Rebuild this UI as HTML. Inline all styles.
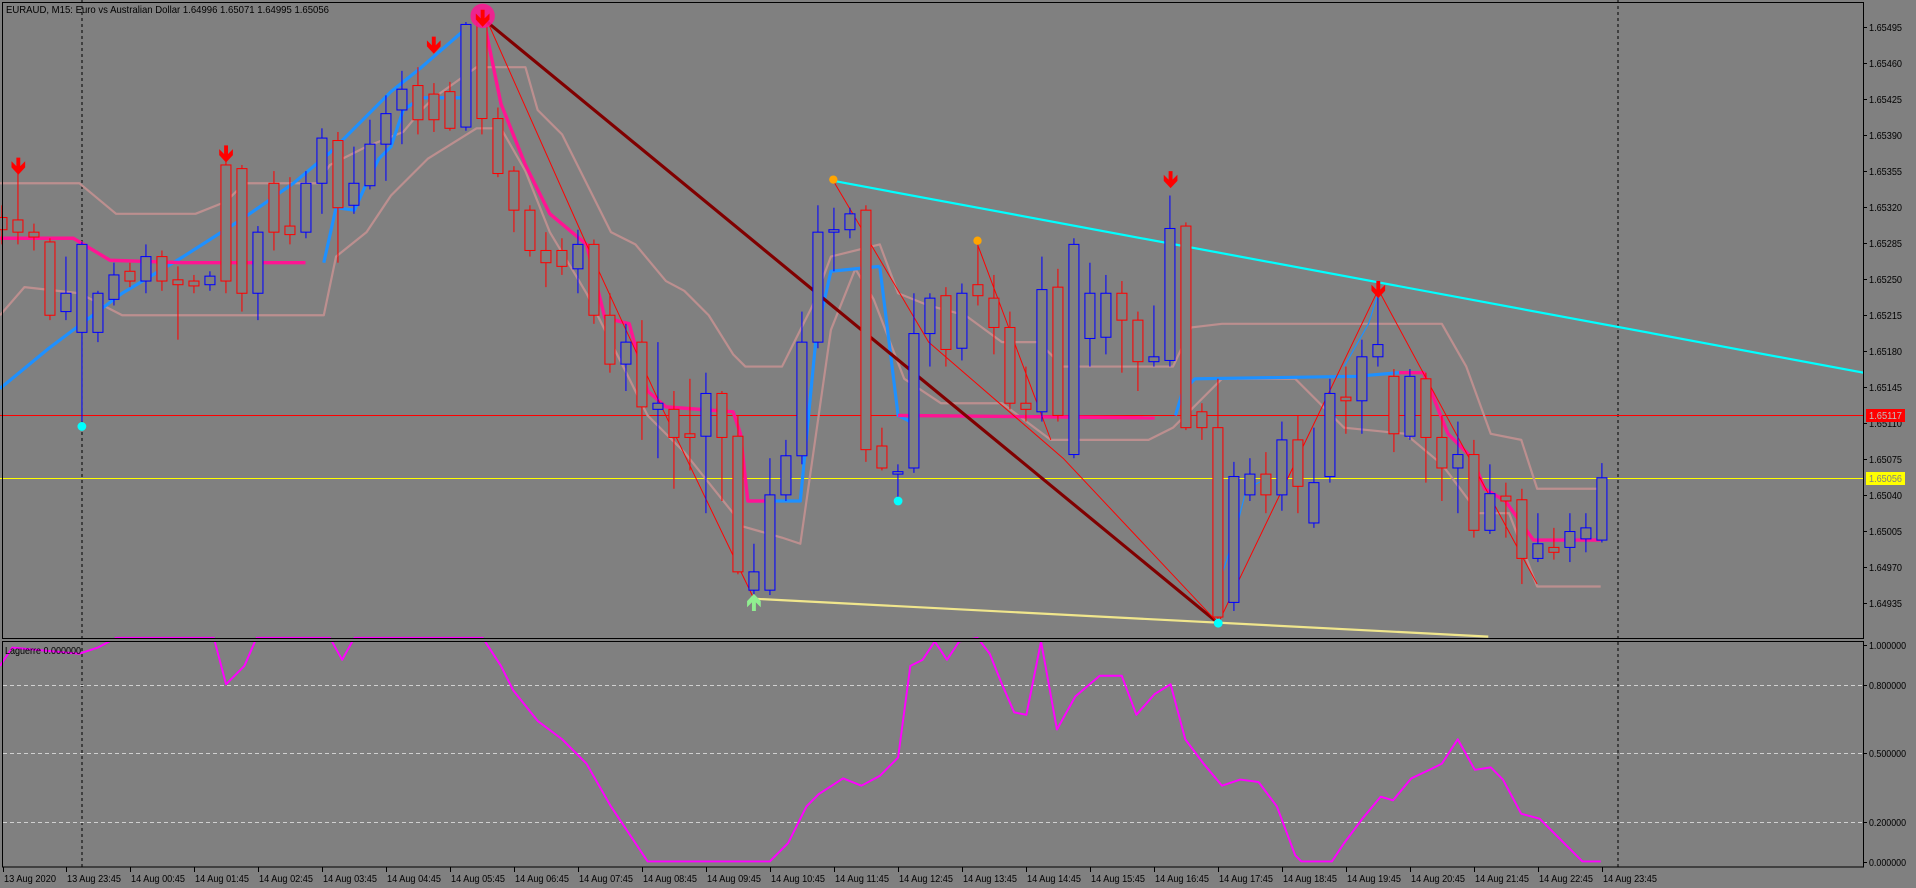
<!DOCTYPE html>
<html><head><meta charset="utf-8">
<style>
html,body{margin:0;padding:0;background:#808080;width:1916px;height:888px;overflow:hidden}
svg{display:block}
text{font-family:"Liberation Sans",sans-serif;font-size:10.5px;fill:#000}
</style></head><body>
<svg id="s" width="1916" height="888" xmlns="http://www.w3.org/2000/svg">
<rect width="1916" height="888" fill="#808080"/>
<g id="grid"></g>
<g id="chart" transform="scale(1.2219)"></g>
<g id="over"></g>
</svg>
<script>
const NS="http://www.w3.org/2000/svg";
function el(p,t,a,txt){const e=document.createElementNS(NS,t);for(const k in a)e.setAttribute(k,a[k]);if(txt!=null)e.textContent=txt;document.getElementById(p).appendChild(e);return e;}
function tx(x,y,s,w,style){const a={x:x,y:y,textLength:w,lengthAdjust:'spacingAndGlyphs'};if(style)a.style=style;return el('over','text',a,s);}
el('grid','line',{x1:82,y1:0,x2:82,y2:867,stroke:'#000','stroke-dasharray':'3,3'});
el('grid','line',{x1:1618,y1:0,x2:1618,y2:867,stroke:'#000','stroke-dasharray':'3,3'});
[685,753,822].forEach(y=>el('grid','line',{x1:3,y1:y+.5,x2:1863,y2:y+.5,stroke:'#d0d0d0','stroke-dasharray':'4,3'}));
el('grid','line',{x1:0,y1:415.5,x2:1863,y2:415.5,stroke:'#ff0000'});
el('grid','line',{x1:0,y1:478.5,x2:1863,y2:478.5,stroke:'#ffff00'});
const C='chart';
function pl(pts,st,w){el(C,'polyline',{points:pts,fill:'none',stroke:st,'stroke-width':w,'stroke-linejoin':'round'});}
pl('0,150 65,150 95,175 160,175 185,165 200,150 260,150 270,135 300,120 330,108 345,90 355,80 390,55 430,55 440,90 460,110 480,150 500,190 520,200 545,230 560,238 580,258 600,290 610,300 640,300 650,280 665,250 680,210 720,200 735,240 760,250 790,258 820,280 850,280 870,300 940,300 960,300 975,268 1000,265 1060,265 1120,265 1180,265 1200,300 1220,355 1245,360 1258,400 1310,400','#bc8f8f',1.8);
pl('0,258 20,235 65,240 100,258 200,258 265,258 275,210 300,190 320,160 350,130 390,105 410,105 430,140 450,190 480,240 500,280 530,340 560,370 580,395 600,420 605,430 640,440 655,445 680,270 700,220 715,245 740,310 770,330 820,330 860,360 940,360 960,350 980,330 1000,310 1060,310 1100,350 1150,355 1180,380 1210,420 1235,420 1258,480 1310,480','#bc8f8f',1.8);
pl('0,318 40,285 100,240 150,210 200,178 240,150 270,125 295,100 320,75 345,55 383,22','#1e90ff',2.6);
pl('265,215 275,170 290,172 300,150 310,130 320,120 330,90 345,80 383,80','#1e90ff',2.6);
pl('615,410 655,410 668,275 680,222 720,218','#1e90ff',2.6);
pl('720,218 735,340 745,345','#1e90ff',2.6);
pl('962,340 968,320 978,310 1110,308 1145,305','#1e90ff',2.6);
pl('1000,470 1010,440 1020,400 1040,390','#1e90ff',1);
pl('1100,300 1120,265 1128,240','#1e90ff',1);
pl('0,195 60,195 90,213 150,215 250,215','#ff1493',2.8);
pl('395,12 410,85 430,135 450,175 480,200 495,260 515,265 530,320 545,333 600,337 606,355 612,410 630,410','#ff1493',2.8);
pl('735,340 945,342','#ff1493',2.8);
pl('1145,305 1165,305 1185,355 1205,375 1215,400 1232,410 1255,442 1310,442','#ff1493',2.8);
pl('395,15 997,510','#800000',2.6);
pl('682,148 1568,313','#00ffff',1.8);
pl('617,490 1218,521','#f0e68c',1.8);
pl('400,20 480,200 540,330 617,490','#ff0000',.8);
pl('682,148 760,280 870,375 997,510','#ff0000',.8);
pl('997,510 1128,237 1258,478','#ff0000',.8);
pl('800,200 860,360','#ff0000',.8);
const D=[
['r',178,188,168,200],['r',180,190,130,200],['r',190,194,183,205],['r',198,258,195,262],['b',240,255,210,262],
['b',200,272,198,345],['b',240,272,238,280],['b',225,245,215,250],['r',222,230,215,235],['b',210,230,200,240],
['r',210,230,205,238],['r',229,233,218,278],['r',230,234,225,240],['b',226,233,222,238],['r',135,230,122,240],
['r',138,240,135,255],['b',190,240,185,262],['r',150,190,140,205],['r',185,192,145,200],['b',150,190,140,195],
['b',113,150,105,175],['r',115,170,108,215],['b',150,168,120,175],['b',118,152,98,155],['b',93,118,78,148],
['b',73,90,58,118],['r',70,98,55,110],['r',77,98,68,108],['r',75,105,67,107],['b',20,104,18,107],
['r',18,97,14,110],['r',97,142,88,145],['r',140,172,136,190],['r',172,205,168,210],['r',205,215,190,235],
['r',205,218,195,225],['b',200,220,188,240],['r',200,258,196,265],['r',258,298,240,305],['b',280,298,265,320],
['r',280,333,262,360],['b',330,335,280,375],['r',335,358,320,400],['r',355,358,310,385],['b',322,357,305,420],
['r',322,358,320,410],['r',357,468,340,470],['b',468,483,445,490],['b',405,483,375,487],['b',373,405,360,410],
['b',280,373,255,380],['b',190,280,168,285],['b',188,190,170,222],['b',175,188,170,195],['r',172,368,168,378],
['r',365,383,350,385],['b',386,388,380,408],['b',273,383,240,387],['b',244,273,240,300],['r',242,286,235,300],
['b',240,285,232,295],['r',233,242,200,250],['r',244,268,225,290],['r',268,330,255,335],['r',330,335,300,345],
['b',237,337,210,345],['r',235,340,220,345],['b',200,372,195,375],['b',240,277,215,300],['b',240,276,225,290],
['r',262,240,230,305],['r',262,296,255,320],['b',292,296,250,300],['b',187,295,160,300],['r',185,350,182,352],
['r',337,350,330,360],['r',350,505,310,510],['b',390,493,378,500],['b',388,405,375,410],['r',388,405,370,420],
['b',360,405,345,418],['r',360,398,340,420],['b',395,428,350,432],['b',322,390,310,395],['r',325,328,300,355],
['b',292,328,278,355],['b',282,292,240,300],['r',308,355,302,370],['b',308,357,302,360],['r',310,358,305,395],
['r',358,383,340,410],['b',372,383,345,420],['r',372,434,360,440],['b',404,434,380,437],['r',406,410,395,440],
['r',409,457,400,478],['b',445,457,420,460],['r',448,452,432,458],['b',435,448,420,460],['b',432,441,420,452],
['b',391,442,379,444]];
D.forEach((d,i)=>{const x=1311-13.094*(100-i);const c=d[0]=='r'?'#ff0000':'#0000ff';
 let t=Math.min(d[1],d[2]),b=Math.max(d[1],d[2]);if(b-t<2)b=t+2;
 el(C,'line',{x1:x,y1:d[3],x2:x,y2:t,stroke:c,'stroke-width':.85});
 el(C,'line',{x1:x,y1:b,x2:x,y2:d[4],stroke:c,'stroke-width':.85});
 el(C,'rect',{x:x-4.1,y:t,width:8.2,height:b-t,fill:'#808080',stroke:c,'stroke-width':.85});
});
el(C,'circle',{cx:395,cy:13,r:10,fill:'#ff1493',opacity:.85});
function down(x,y){el(C,'path',{d:`M${x-1.6},${y-12} h3.2 v7 l4,-4 v5 l-5.6,6 l-5.6,-6 v-5 l4,4 z`,fill:'#ff0000'});}
[[15,141],[185,131],[355,42],[395,20],[958,152],[1128,242]].forEach(p=>down(p[0],p[1]));
el(C,'path',{d:'M615.4,500 h3.2 v-7 l4,4 v-5 l-5.6,-6 l-5.6,6 v5 l4,-4 z',fill:'#90ee90'});
[[67,349],[735,410],[997,510]].forEach(p=>el(C,'circle',{cx:p[0],cy:p[1],r:3.6,fill:'#00ffff'}));
[[682,147],[800,197]].forEach(p=>el(C,'circle',{cx:p[0],cy:p[1],r:3.4,fill:'#ffa500'}));
pl('0,545 10,530 65,535 80,530 95,522 175,522 185,560 200,545 210,522 270,522 280,540 290,522 395,522 410,545 420,565 440,590 460,605 480,625 500,660 520,690 530,705 630,705 645,690 660,660 670,650 690,637 705,643 720,635 735,620 745,545 755,540 765,525 775,540 785,525 800,522 810,535 820,560 830,583 840,585 852,525 865,597 880,570 900,553 918,553 930,585 945,568 958,560 970,605 985,625 1000,643 1015,638 1030,640 1045,660 1060,700 1065,705 1090,705 1100,690 1115,670 1130,652 1140,655 1155,637 1170,630 1180,625 1193,605 1207,630 1220,628 1230,638 1245,666 1260,670 1275,685 1295,705 1310,705','#ff00ff',1.6);
const O='over';
el(O,'rect',{x:1864,y:0,width:52,height:888,fill:'#808080'});
el(O,'rect',{x:0,y:638,width:1864,height:4,fill:'#808080'});
el(O,'rect',{x:0,y:867,width:1916,height:21,fill:'#808080'});
el(O,'rect',{x:2.5,y:2.5,width:1861,height:636,fill:'none',stroke:'#000'});
el(O,'rect',{x:2.5,y:641.5,width:1861,height:225.5,fill:'none',stroke:'#000'});
for(let k=0;k<17;k++){const y=27+k*36;const p=(1.65495-k*0.00035).toFixed(5);
 el(O,'line',{x1:1863,y1:y+.5,x2:1867,y2:y+.5,stroke:'#000'});
 tx(1869,y+4,p,33);}
el(O,'rect',{x:1866,y:409,width:39,height:13,fill:'#ff0000'});
tx(1869,419,'1.65117',33,'fill:#c0c0c0');
el(O,'rect',{x:1866,y:472,width:39,height:13,fill:'#ffff00'});
tx(1869,482,'1.65056',33,'fill:#808080');
[[645,'1.000000'],[685,'0.800000'],[753,'0.500000'],[822,'0.200000'],[862,'0.000000']].forEach(a=>{
 el(O,'line',{x1:1863,y1:a[0]+.5,x2:1867,y2:a[0]+.5,stroke:'#000'});tx(1869,a[0]+4,a[1],37);});
const T=['13 Aug 2020','13 Aug 23:45'];for(let h=0;h<24;h++)T.push('14 Aug '+String(h).padStart(2,'0')+':45');
T.forEach((t,i)=>{const x=i==0?3:66+64*(i-1);el(O,'line',{x1:x+.5,y1:867,x2:x+.5,y2:872,stroke:'#000'});tx(x+1,882,t,i==0?52:54);});
tx(6,13,'EURAUD, M15:  Euro vs Australian Dollar  1.64996 1.65071 1.64995 1.65056',323);
tx(5,654,'Laguerre 0.000000',76);
</script>
</body></html>
